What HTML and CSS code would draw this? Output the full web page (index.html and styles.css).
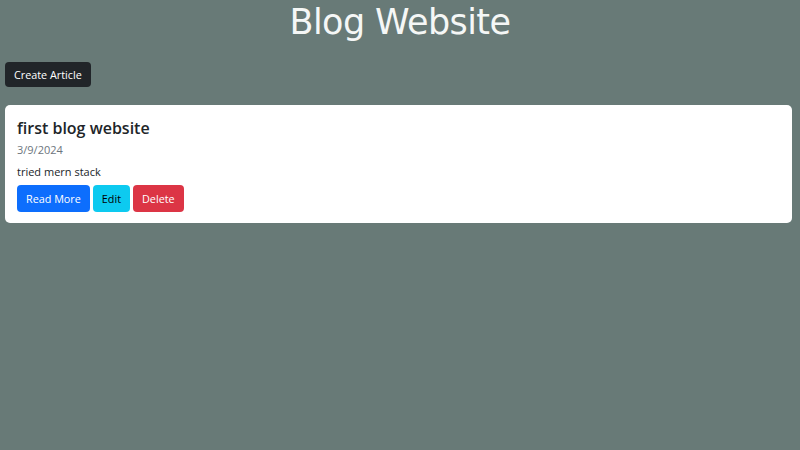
FILE: index.html
```html
<!DOCTYPE html>
<html>
<head>
<meta charset="utf-8">
<link rel="stylesheet" href="styles.css">
</head>
<body>
<h1 class="title">Blog Website</h1>
<div class="toolbar"><button class="btn btn-dark">Create Article</button></div>
<div class="card">
  <h4 class="card-title">first blog website</h4>
  <div class="date">3/9/2024</div>
  <p class="text">tried mern stack</p>
  <div class="actions">
    <button class="btn btn-primary">Read More</button>
    <button class="btn btn-info">Edit</button>
    <button class="btn btn-danger">Delete</button>
  </div>
</div>
</body>
</html>
```
FILE: styles.css
```css
html, body { margin: 0; padding: 0; }
body {
  background: #687a77;
  font-family: "Open Sans", "Noto Sans", sans-serif;
  color: #212529;
  width: 800px;
  height: 450px;
  overflow: hidden;
}
.title {
  margin: 0;
  padding-top: 0;
  height: 50px;
  line-height: 44px;
  text-align: center;
  font-family: "DejaVu Sans", sans-serif;
  font-weight: normal;
  font-size: 35px;
  color: #f5f7f6;
  letter-spacing: -0.6px;
}
.toolbar { padding: 12px 5px 0; height: 25px; }
.btn {
  border: 0;
  border-radius: 4px;
  font-family: "Open Sans", sans-serif;
  font-size: 10.8px;
  cursor: pointer;
  margin: 0;
}
.btn-dark { background: #212529; color: #fff; height: 25px; padding: 0 9px; }
.card {
  margin: 18px 8px 0 5px;
  background: #fff;
  border-radius: 5px;
  padding: 11px 12px 11px 12px;
  height: 96px;
}
.card-title { margin: 0; font-size: 16px; font-weight: 600; line-height: 24px; }
.date { font-size: 11px; color: #6c757d; line-height: 18px; margin-top: 1px; }
.text { font-size: 11px; margin: 4px 0 4px; line-height: 18px; }
.actions { display: flex; gap: 3px; }
.actions .btn { height: 27px; padding: 0 9px; border-radius: 4px; }
.btn-primary { background: #0d6efd; color: #fff; }
.btn-info { background: #0dcaf0; color: #000; }
.btn-danger { background: #dc3545; color: #fff; }
```
